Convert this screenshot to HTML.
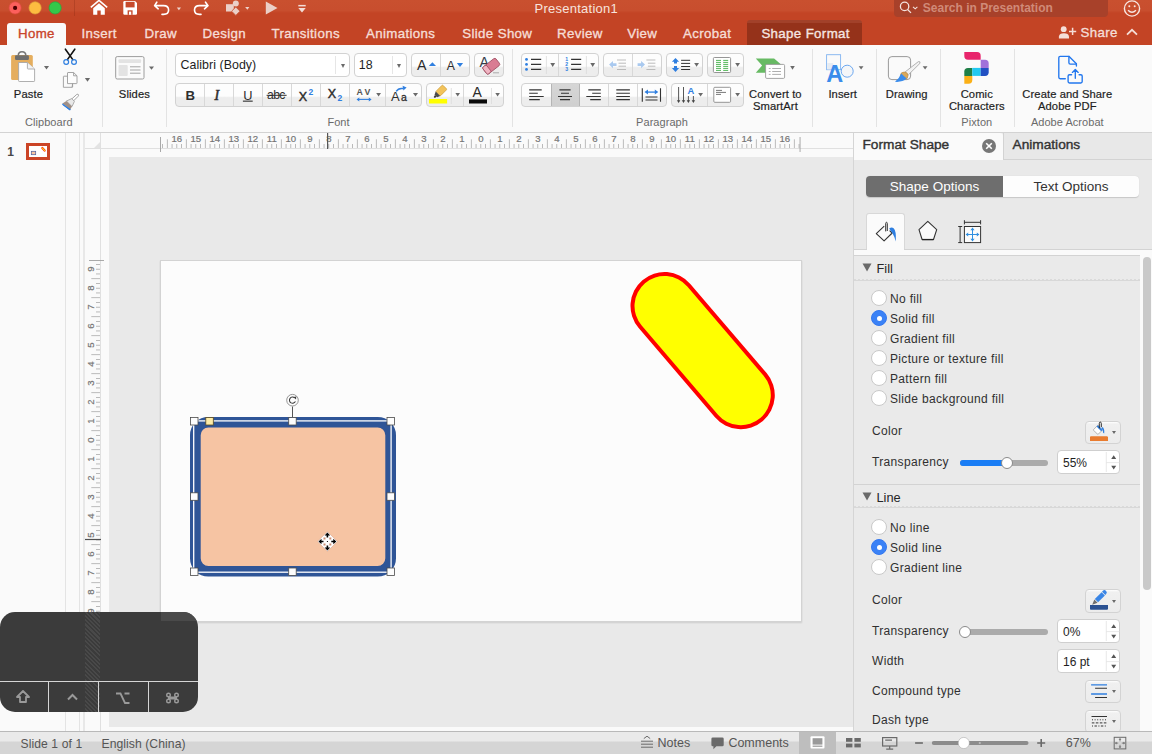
<!DOCTYPE html>
<html><head><meta charset="utf-8">
<style>
*{box-sizing:border-box;margin:0;padding:0}
html,body{width:1152px;height:754px;overflow:hidden;background:#FAFAFA;font-family:"Liberation Sans",sans-serif;color:#262626}
.a{position:absolute}
.t{position:absolute;white-space:nowrap}
#title{left:0;top:0;width:1152px;height:45px;background:linear-gradient(#C9502F 0px,#C84E2E 10.5px,#C34425 13px,#C34425 45px)}
.tab{position:absolute;top:25.5px;font-size:13.3px;font-weight:400;-webkit-text-stroke:0.35px currentColor;color:#F6DDD6;white-space:nowrap;letter-spacing:0.35px}
#ribbon{left:0;top:45px;width:1152px;height:88px;background:#FAFAFA;border-bottom:1px solid #D3D3D3}
.sep{position:absolute;top:49px;width:1px;height:78px;background:#E3E3E3}
.glabel{position:absolute;top:116px;font-size:11px;color:#6A6A6A;white-space:nowrap;text-align:center;letter-spacing:0.05px}
.rl{position:absolute;font-size:11.2px;color:#1E1E1E;white-space:nowrap;text-align:center;letter-spacing:0.1px;-webkit-text-stroke:0.2px #1E1E1E}
.btn{position:absolute;border:1px solid #D2D2D2;border-radius:4px;background:linear-gradient(#FDFDFD 0%,#FDFDFD 55%,#EDEDED 62%,#EDEDED 100%);overflow:hidden}
.combo{position:absolute;border:1px solid #D2D2D2;border-radius:4px;background:#FFFFFF}
.vs{position:absolute;top:0;bottom:0;width:1px;background:#D8D8D8}
.dd{position:absolute;width:0;height:0;border-left:3.5px solid transparent;border-right:3.5px solid transparent;border-top:5px solid #6A6A6A}
#panel{left:854px;top:133px;width:298px;height:598px;background:#E9E9E9}
.sec{position:absolute;left:0;width:286px;background:#EAEAEA}
.radio{position:absolute;width:16px;height:16px;border-radius:50%;background:#FFFFFF;border:1px solid #C9C9C9}
.radio.on{background:#3B82F6;border:1px solid #3478F0}
.radio.on:after{content:"";position:absolute;left:4.5px;top:4.5px;width:5px;height:5px;border-radius:50%;background:#fff}
.spin{background:#FFF;border:1px solid #CFCFCF;border-radius:4px}
.pl{position:absolute;font-size:12px;color:#303030;white-space:nowrap;letter-spacing:0.33px}
</style></head>
<body>
<!-- TITLE BAR -->
<div id="title" class="a"></div>
<svg class="a" style="left:0;top:0" width="70" height="20">
<circle cx="15.1" cy="7.9" r="6.1" fill="#FC605C" stroke="#DE4A40" stroke-width="0.7"/>
<circle cx="15.1" cy="7.9" r="2.1" fill="#4D0002"/>
<circle cx="35.1" cy="7.9" r="6.1" fill="#FDBC40" stroke="#DEA03A" stroke-width="0.7"/>
<circle cx="55.1" cy="7.9" r="6.1" fill="#34C84A" stroke="#27A83A" stroke-width="0.7"/>
</svg>
<div class="t" style="left:534.5px;top:1px;font-size:13px;color:#F7E3DD;letter-spacing:0.25px">Presentation1</div>

<div class="a" style="left:74px;top:0;width:1px;height:16px;background:rgba(120,30,10,0.25)"></div>
<!-- tabs -->
<div class="a" style="left:7px;top:23px;width:59px;height:22px;background:#FAFAFA;border-radius:3px 3px 0 0"></div>
<div class="tab" style="left:18px;color:#C9452A">Home</div>
<div class="tab" style="left:81.5px">Insert</div>
<div class="tab" style="left:144.5px">Draw</div>
<div class="tab" style="left:202.5px">Design</div>
<div class="tab" style="left:271.5px">Transitions</div>
<div class="tab" style="left:366px">Animations</div>
<div class="tab" style="left:462.3px">Slide Show</div>
<div class="tab" style="left:557px">Review</div>
<div class="tab" style="left:627.2px">View</div>
<div class="tab" style="left:683.1px">Acrobat</div>
<div class="a" style="left:747px;top:20px;width:115px;height:25px;background:linear-gradient(#A2412A 0,#A2412A 2.5px,#95321A 3.5px);border-radius:3px 3px 0 0"></div>
<div class="tab" style="left:761.4px;color:#F6E6E1">Shape Format</div>

<!-- search -->
<div class="a" style="left:894px;top:0;width:214px;height:17px;background:#A8412A;border-radius:0 0 4px 4px"></div>
<div class="t" style="left:922.8px;top:1px;font-size:12px;font-weight:700;color:#D08A78">Search in Presentation</div>
<svg class="a" style="left:0;top:0" width="1152" height="45">
<g fill="none" stroke="#F4E3DE" stroke-width="1.3"><circle cx="904.6" cy="6.4" r="4.2"/><path d="M907.6 9.5 L911 12.9"/><path d="M913 6.8 L915.2 8.8 L917.4 6.8" stroke-width="1.1"/></g>
<g fill="none" stroke="#F7E6E1" stroke-width="1.4"><circle cx="1132" cy="8.5" r="7.6"/><path d="M1128 10.2 Q1132 14.2 1136 10.2" stroke-width="1.3"/></g>
<circle cx="1129.3" cy="6.3" r="1" fill="#F7E6E1"/><circle cx="1134.7" cy="6.3" r="1" fill="#F7E6E1"/>
<!-- share person -->
<circle cx="1063.7" cy="29.2" r="2.9" fill="#F5DED7"/>
<path d="M1058.9 38.6 L1058.9 36.5 Q1059.3 33.3 1063.9 33.3 Q1068.6 33.3 1069 36.5 L1069 38.6 Z" fill="#F5DED7"/>
<path d="M1072.6 27.8 V35 M1069 31.4 H1076.2" stroke="#F5DED7" stroke-width="1.5"/>
<path d="M1127 34.6 L1132 29.8 L1137 34.6" fill="none" stroke="#F5DED7" stroke-width="1.8"/>
<!-- quick access -->
<path d="M90.8 7.4 L99 0.4 L107.2 7.4" fill="none" stroke="#FFFFFF" stroke-width="1.6"/>
<path d="M93.2 8.2 L99 3.2 L104.8 8.2 V14.8 H100.7 V10.6 H97.3 V14.8 H93.2 Z" fill="#FFFFFF"/>
<path d="M123.3 2.2 Q123.3 1 124.5 1 H135 L137 3 V13.6 Q137 14.8 135.8 14.8 H124.5 Q123.3 14.8 123.3 13.6 Z" fill="#FFFFFF"/>
<rect x="125.6" y="1.8" width="9" height="5.6" fill="#C64A2C"/>
<rect x="127.6" y="10.3" width="5" height="4.5" fill="#C64A2C"/>
<rect x="129" y="11.6" width="2.2" height="3.2" fill="#FFFFFF"/>
<path d="M156.8 2.2 L154.6 5.6 L158.2 8.8 M155 5.6 H163.5 Q168.6 5.6 168.6 10 Q168.6 14.4 163.5 14.4 H162" fill="none" stroke="#FFFFFF" stroke-width="1.6" stroke-linejoin="round" stroke-linecap="round"/>
<path d="M176.8 7.5 H181 L178.9 10.2 Z" fill="#EED3CC"/>
<path d="M205.5 2.2 L208 5.6 L204.5 8.8 M207.6 5.6 H199.5 Q194.5 5.6 194.5 10 Q194.5 14.4 199.5 14.4 H201" fill="none" stroke="#FFFFFF" stroke-width="1.6" stroke-linejoin="round" stroke-linecap="round"/>
<rect x="226" y="4.2" width="7.8" height="7.3" fill="#EBCFC7"/>
<circle cx="235.8" cy="3.6" r="3" fill="#EBCFC7"/>
<path d="M235.8 7 L240 11.2 L235.8 15.4 L231.6 11.2 Z" fill="#EBCFC7" stroke="#C64A2C" stroke-width="0.8"/>
<path d="M245.2 7 H249.4 L247.3 9.8 Z" fill="#EED3CC"/>
<path d="M265.8 1.5 L277.5 8 L265.8 14.5 Z" fill="#EBCFC7"/>
<rect x="298.3" y="4.9" width="7.4" height="1.5" fill="#F3DDD7"/>
<path d="M298.3 8.1 H305.7 L302 12.6 Z" fill="#F3DDD7"/>
</svg>

<div class="tab" style="left:1080.6px;top:24.5px;color:#F5DED7">Share</div>

<!-- RIBBON -->
<div id="ribbon" class="a"></div>
<div class="sep" style="left:102px"></div>
<div class="sep" style="left:166px"></div>
<div class="sep" style="left:512px"></div>
<div class="sep" style="left:812px"></div>
<div class="sep" style="left:876px"></div>
<div class="sep" style="left:940px"></div>
<div class="sep" style="left:1014px"></div>









<div class="rl" style="left:-31.6px;width:120px;top:88px">Paste</div>
<div class="rl" style="left:74.4px;width:120px;top:88px">Slides</div>
<div class="glabel" style="left:-11.200000000000003px;width:120px;top:116px">Clipboard</div>
<div class="glabel" style="left:278.5px;width:120px;top:116px">Font</div>
<div class="glabel" style="left:602px;width:120px;top:116px">Paragraph</div>
<div class="glabel" style="left:916.8px;width:120px;top:116px">Pixton</div>
<div class="glabel" style="left:1007.3px;width:120px;top:116px">Adobe Acrobat</div>
<div class="rl" style="left:715.4px;width:120px;top:88px;line-height:12px">Convert to<br>SmartArt</div>
<div class="rl" style="left:782.7px;width:120px;top:88px">Insert</div>
<div class="rl" style="left:846.7px;width:120px;top:88px">Drawing</div>
<div class="rl" style="left:916.8px;width:120px;top:88px;line-height:12px">Comic<br>Characters</div>
<div class="rl" style="left:1007.3px;width:120px;top:88px;line-height:12px">Create and Share<br>Adobe PDF</div>
<!-- font combos -->
<div class="combo" style="left:175px;top:53px;width:175px;height:24px"><div class="vs" style="left:159px;top:2px;bottom:2px;background:#E6E6E6"></div><div class="dd" style="left:164.5px;top:9.5px;border-left-width:2.8px;border-right-width:2.8px;border-top-width:4px"></div></div>
<div class="t" style="left:180.5px;top:58px;font-size:12.4px;color:#1E1E1E;letter-spacing:0.05px">Calibri (Body)</div>
<div class="combo" style="left:354px;top:53px;width:53px;height:24px"><div class="vs" style="left:37px;top:2px;bottom:2px;background:#E6E6E6"></div><div class="dd" style="left:42px;top:9.5px;border-left-width:2.8px;border-right-width:2.8px;border-top-width:4px"></div></div>
<div class="t" style="left:358.8px;top:58px;font-size:12.4px;color:#1E1E1E">18</div>

<div class="btn" style="left:411px;top:53px;width:59px;height:24px"><div class="vs" style="left:27.9px"></div></div>
<div class="btn" style="left:474px;top:53px;width:30px;height:24px"></div>
<div class="btn" style="left:175px;top:83px;width:247px;height:24px"><div class="vs" style="left:27.9px"></div><div class="vs" style="left:56.6px"></div><div class="vs" style="left:86.1px"></div><div class="vs" style="left:115.0px"></div><div class="vs" style="left:143.9px"></div><div class="vs" style="left:173.3px"></div><div class="vs" style="left:209.0px"></div></div>
<div class="btn" style="left:426px;top:83px;width:78px;height:24px"><div class="vs" style="left:36.2px"></div></div>
<!-- paragraph -->
<div class="btn" style="left:521px;top:53px;width:78px;height:24px"><div class="vs" style="left:35.8px"></div></div>
<div class="btn" style="left:603px;top:53px;width:59px;height:24px"><div class="vs" style="left:28.0px"></div></div>
<div class="btn" style="left:666px;top:53px;width:37px;height:24px"></div>
<div class="btn" style="left:707px;top:53px;width:37px;height:24px"></div>
<div class="btn" style="left:521px;top:83px;width:146px;height:24px">
<div class="a" style="left:28.7px;top:0;width:29px;height:24px;background:linear-gradient(#D6D6D6,#CFCFCF);border-left:1px solid #B5B5B5;border-right:1px solid #B5B5B5"></div><div class="vs" style="left:86.2px"></div><div class="vs" style="left:114.8px"></div></div>
<div class="btn" style="left:671px;top:83px;width:73px;height:24px"><div class="vs" style="left:34.7px"></div></div>







<!-- RIBBON ICONS -->
<svg class="a" style="left:0;top:0" width="1152" height="133" font-family="Liberation Sans">
<!-- paste -->
<rect x="11.1" y="55" width="21.7" height="25" rx="1.5" fill="#E5AE5E"/>
<path d="M18.3 55.5 Q18.3 51.8 22 51.8 Q25.8 51.8 25.8 55.5" fill="none" stroke="#767676" stroke-width="1.6"/>
<rect x="15" y="55.3" width="13.9" height="4.6" rx="1.2" fill="#6E6E6E"/>
<path d="M18.6 62.5 H27.4 L34.6 69 V80.8 Q34.6 81.5 33.9 81.5 H19.3 Q18.6 81.5 18.6 80.8 Z" fill="#FFFFFF" stroke="#A6A6A6" stroke-width="0.9"/>
<path d="M27.4 62.5 V68.3 Q27.4 69 28.1 69 H34.6" fill="#F3F3F3" stroke="#A6A6A6" stroke-width="0.9"/>
<path d="M44 66 H49 L46.5 69.6 Z" fill="#6A6A6A"/>
<!-- scissors -->
<path d="M65.4 49.2 L72.8 59.6 M74.8 49.2 L67.4 59.6" stroke="#111" stroke-width="1.6" stroke-linecap="round"/>
<circle cx="66.2" cy="62" r="2.4" fill="none" stroke="#2F7FE0" stroke-width="1.2"/>
<circle cx="74" cy="62" r="2.4" fill="none" stroke="#2F7FE0" stroke-width="1.2"/>
<!-- copy -->
<path d="M67.5 83.6 V73 Q67.5 72.5 68 72.5 H73.6 L77 75.8 V83.1 Q77 83.6 76.5 83.6 Z" fill="#FCFCFC" stroke="#9B9B9B" stroke-width="0.9"/>
<path d="M73.6 72.5 V75.8 H77" fill="none" stroke="#9B9B9B" stroke-width="0.9"/>
<path d="M63.4 87.3 V76.7 Q63.4 76.2 63.9 76.2 H67.5 M72.6 83.6 V86.8 Q72.6 87.3 72.1 87.3 Z" fill="none" stroke="#9B9B9B" stroke-width="0.9"/>
<path d="M63.4 87.3 H72.1" stroke="#9B9B9B" stroke-width="0.9"/>
<path d="M84.9 78 H90.1 L87.5 81.7 Z" fill="#6A6A6A"/>
<!-- format painter -->
<path d="M71.5 99.2 L76.8 94.4 Q78.2 93.6 78.6 95 Q78.6 95.8 77.8 96.6 L72.8 101.6 Z" fill="#FFFFFF" stroke="#9A9A9A" stroke-width="0.9"/>
<path d="M66.4 101 L71.8 98.6 L74.4 101.4 L72 106.6 Z" fill="#E9E9E9" stroke="#9A9A9A" stroke-width="0.8"/>
<path d="M66.4 101 L72 106.6 L70.3 109.6 L62.4 103.6 Z" fill="#A08F86"/>
<path d="M63.2 104.2 L70.8 109.2 L70 110.4 L62.2 104.8 Z" fill="#2F7FE0"/>
<path d="M62.4 103.6 L70.3 109.6 L69.6 110.2 L62 104.2 Z" fill="#2F7FE0"/>
<!-- slides -->
<rect x="115.7" y="56.6" width="28.3" height="22.4" rx="1.5" fill="#FBFBFB" stroke="#9C9C9C" stroke-width="1"/>
<rect x="118.5" y="59.2" width="22.6" height="3.8" rx="1" fill="#E3E3E3"/>
<rect x="118.5" y="65" width="9.2" height="11" rx="1" fill="#E3E3E3"/>
<path d="M130 66.8 H140.5 M130 70 H140.5 M130 73.2 H140.5" stroke="#999" stroke-width="0.9"/>
<path d="M149 66.6 H154 L151.5 69.7 Z" fill="#6A6A6A"/>
<!-- font size -->
<text x="417" y="69.5" font-size="14.2" fill="#2A2A2A">A</text>
<path d="M428.8 66 L432.4 62.2 L436 66 Z" fill="#2F7FE0"/>
<text x="446.8" y="69.5" font-size="12.2" fill="#2A2A2A">A</text>
<path d="M456.8 63 H463.1 L460 66.9 Z" fill="#2F7FE0"/>
<!-- clear formatting -->
<text x="479.4" y="66.5" font-size="14.2" fill="#333D4A">A</text>
<g transform="translate(491.3 66.2) rotate(-38)">
<rect x="-8.2" y="-4.4" width="16.4" height="8.8" rx="1.8" fill="#D97C93" stroke="#9E4E61" stroke-width="0.8"/>
<rect x="-8.2" y="-4.4" width="5" height="8.8" rx="1.5" fill="#F0B5C3" stroke="#9E4E61" stroke-width="0.8"/>
</g>
<path d="M493 72.8 H499" stroke="#999" stroke-width="0.8"/>
<!-- B I U -->
<text x="185.6" y="99.6" font-size="13.2" font-weight="700" fill="#2E2E2E">B</text>
<text x="214.4" y="99.6" font-size="14" font-style="italic" font-family="Liberation Serif" fill="#2E2E2E" stroke="#2E2E2E" stroke-width="0.5">I</text>
<text x="243.3" y="99.6" font-size="12.8" fill="#2E2E2E">U</text>
<rect x="242.9" y="100.6" width="9.8" height="1.1" fill="#2E2E2E"/>
<text x="267" y="98.6" font-size="12.2" fill="#2E2E2E" letter-spacing="-0.6">abc</text>
<rect x="266.6" y="94.8" width="20" height="1" fill="#2E2E2E"/>
<text x="298.8" y="100.8" font-size="12.5" fill="#2E2E2E" stroke="#2E2E2E" stroke-width="0.45">X</text>
<text x="308.4" y="94.9" font-size="8.5" font-weight="700" fill="#2F7FE0">2</text>
<text x="327.8" y="97.6" font-size="12.5" fill="#2E2E2E" stroke="#2E2E2E" stroke-width="0.45">X</text>
<text x="337.4" y="100.8" font-size="8.5" font-weight="700" fill="#2F7FE0">2</text>
<!-- AV -->
<text x="356.6" y="94.6" font-size="8.8" font-weight="700" fill="#555" letter-spacing="2.2">AV</text>
<path d="M357.5 99.4 H370.6" stroke="#2F7FE0" stroke-width="1.1"/>
<path d="M356.5 99.4 L359.3 97.4 V101.4 Z M371.6 99.4 L368.8 97.4 V101.4 Z" fill="#2F7FE0"/>
<path d="M376.2 93 H381 L378.6 96.6 Z" fill="#6A6A6A"/>
<!-- Aa -->
<text x="391" y="100.8" font-size="13" fill="#2E2E2E">A</text>
<text x="401" y="100.8" font-size="10.5" fill="#2E2E2E" stroke="#2E2E2E" stroke-width="0.3">a</text>
<path d="M396.2 91.4 Q398.6 87.6 403.2 88.6" fill="none" stroke="#2F7FE0" stroke-width="1.5"/>
<path d="M402.6 85.8 L406.6 87.4 L403.4 90.6 Z" fill="#2F7FE0"/>
<path d="M413 93 H418 L415.5 96.6 Z" fill="#6A6A6A"/>
<!-- highlighter -->
<g transform="translate(438.8 93) rotate(45)">
<rect x="-3.2" y="-8.4" width="6.4" height="9.6" rx="1" fill="#F2C35B" stroke="#C9972F" stroke-width="0.6"/>
<path d="M-3.2 1.2 H3.2 L1.8 4.2 H-1.8 Z" fill="#4A4A4A"/>
<path d="M-1.2 4.2 H1.2 L0.8 6.4 H-0.8 Z" fill="#3A3A3A"/>
</g>
<rect x="429" y="99" width="18.1" height="4.5" fill="#FFFF00"/>
<path d="M451.3 88 V104" stroke="#DADADA" stroke-width="0.8"/>
<path d="M455.4 93 H460 L457.7 96.6 Z" fill="#6A6A6A"/>
<!-- font color -->
<text x="472.5" y="96.8" font-size="14" fill="#2A2A2A">A</text>
<rect x="469" y="99.4" width="18" height="4.1" fill="#0A0A0A"/>
<path d="M491.5 88 V104" stroke="#DADADA" stroke-width="0.8"/>
<path d="M495.3 93 H499.9 L497.6 96.6 Z" fill="#6A6A6A"/>
<!-- bullets -->
<g fill="#2F7FE0"><circle cx="526.5" cy="59.4" r="1.4"/><circle cx="526.5" cy="64.4" r="1.4"/><circle cx="526.5" cy="69.4" r="1.4"/></g>
<path d="M531 59.4 H541.2 M531 64.4 H541.2 M531 69.4 H541.2" stroke="#333" stroke-width="1.1"/>
<path d="M546.4 56 V74" stroke="#DADADA" stroke-width="0.8"/>
<path d="M550.3 63 H555.1 L552.7 66.9 Z" fill="#6A6A6A"/>
<g font-size="5.2" font-weight="700" fill="#2F7FE0" text-anchor="middle"><text x="566.8" y="61.3">1</text><text x="566.8" y="66.3">2</text><text x="566.8" y="71.3">3</text></g>
<path d="M571.1 59.4 H581.2 M571.1 64.4 H581.2 M571.1 69.4 H581.2" stroke="#333" stroke-width="1.1"/>
<path d="M586.4 56 V74" stroke="#DADADA" stroke-width="0.8"/>
<path d="M590.3 63 H595.1 L592.7 66.9 Z" fill="#6A6A6A"/>
<!-- indent -->
<path d="M609.1 64.6 L613 61 V63.2 H616.5 V66 H613 V68.2 Z" fill="#A9C9EF"/>
<path d="M617 60 H626 M618.5 63.2 H626 M618.5 66.2 H626 M617 69.5 H626" stroke="#B5B5B5" stroke-width="0.9"/>
<path d="M645 64.6 L641.1 61 V63.2 H637.6 V66 H641.1 V68.2 Z" fill="#A9C9EF"/>
<path d="M646.4 60 H655.4 M647.9 63.2 H655.4 M647.9 66.2 H655.4 M646.4 69.5 H655.4" stroke="#B5B5B5" stroke-width="0.9"/>
<!-- line spacing -->
<path d="M675.5 58 L679.1 61.8 H677 V63.5 H674 V61.8 H671.9 Z M675.5 71.9 L679.1 68.1 H677 V65.9 H674 V68.1 H671.9 Z" fill="#2F7FE0"/>
<path d="M681.1 60.3 H690.1 M681.1 63.4 H690.1 M681.1 66.5 H690.1 M681.1 69.5 H690.1" stroke="#333" stroke-width="1"/>
<path d="M694.2 63.1 H699 L696.6 66.7 Z" fill="#6A6A6A"/>
<!-- columns -->
<rect x="713.4" y="57.5" width="17.2" height="15" rx="1" fill="#FFFFFF" stroke="#8A8A8A" stroke-width="0.9"/>
<path d="M716 60.4 H721 M716 62.4 H721 M716 64.4 H721 M716 66.4 H721 M716 68.4 H721 M716 70.4 H721 M723.2 60.4 H728.2 M723.2 62.4 H728.2 M723.2 64.4 H728.2 M723.2 66.4 H728.2 M723.2 68.4 H728.2 M723.2 70.4 H728.2" stroke="#3FAF45" stroke-width="0.9"/>
<path d="M735.2 63.1 H740 L737.6 66.7 Z" fill="#6A6A6A"/>
<!-- align -->
<g stroke="#333" stroke-width="1.1">
<path d="M529.2 89.9 H541.7 M529.2 93.2 H537.8 M529.2 96.5 H543.7 M529.2 99.6 H539.8"/>
<path d="M559.4 89.9 H570.6 M561 93.2 H569 M558 96.5 H572 M560 99.6 H570"/>
<path d="M588.3 89.9 H600.8 M592.2 93.2 H600.8 M586.3 96.5 H600.8 M590.2 99.6 H600.8"/>
<path d="M616.3 89.9 H629.9 M616.3 93.2 H629.9 M616.3 96.5 H629.9 M616.3 99.6 H629.9"/>
<path d="M642.3 88.2 V101.8 M660.5 88.2 V101.8 M645.5 97 H657.5 M645.5 100 H657.5"/>
</g>
<path d="M644.5 92.1 L648 89.6 V94.6 Z M658.3 92.1 L654.8 89.6 V94.6 Z" fill="#2F7FE0"/>
<path d="M647 92.1 H655.8" stroke="#2F7FE0" stroke-width="1.3"/>
<!-- text direction -->
<g stroke="#444" stroke-width="0.9"><path d="M678.6 87 V102 M683.5 87 V102 M688.4 96 V102 M693.4 96 V102"/></g>
<g fill="#444"><path d="M676.9 100.3 H680.3 L678.6 103 Z M681.8 100.3 H685.2 L683.5 103 Z M686.7 100.3 H690.1 L688.4 103 Z M691.7 100.3 H695.1 L693.4 103 Z"/></g>
<text x="687.6" y="93.8" font-size="9.4" font-weight="700" fill="#2F7FE0">A</text>
<path d="M698.2 93 H703 L700.6 96.5 Z" fill="#6A6A6A"/>
<rect x="713.8" y="87.3" width="16.8" height="15" rx="1" fill="#FFFFFF" stroke="#8A8A8A" stroke-width="0.9"/>
<path d="M716 90.4 H722 M716 92.4 H726 M716 94.4 H721" stroke="#555" stroke-width="0.8"/>
<path d="M735.2 93 H740 L737.6 96.5 Z" fill="#6A6A6A"/>
<!-- smartart -->
<path d="M755.8 58.4 H774.1 L781.1 64.4 V72.75 H755.8 L762.1 65.55 Z" fill="#67BA63"/>
<rect x="765.6" y="64.4" width="19" height="14" rx="1.2" fill="#FFFFFF" stroke="#9A9A9A" stroke-width="0.9"/>
<path d="M768.8 68.5 H770.6 M768.8 71.5 H770.6 M768.8 74.4 H770.6 M772.2 68.5 H781 M772.2 71.5 H781 M772.2 74.4 H781" stroke="#A6A6A6" stroke-width="0.9"/>
<path d="M790.2 66 H794.8 L792.5 69.7 Z" fill="#6A6A6A"/>
<!-- insert -->
<rect x="826.6" y="54.7" width="14" height="15" fill="none" stroke="#80B3F0" stroke-width="0.9"/>
<rect x="827.2" y="63" width="6" height="6.4" fill="#E6ECF3"/>
<circle cx="847.2" cy="71.2" r="6" fill="#F4F6F8" stroke="#5C9EEE" stroke-width="0.9"/>
<text x="826.2" y="81.5" font-size="23.5" font-weight="700" fill="#3A8CEB">A</text>
<path d="M858.7 66.2 H863.5 L861.1 69.5 Z" fill="#6A6A6A"/>
<!-- drawing -->
<rect x="888.4" y="56.6" width="22.2" height="23" rx="3.5" fill="#FAFAFA" stroke="#8F8F8F" stroke-width="0.9"/>
<path d="M918.4 61.6 Q920.8 61.2 919.9 63.4 L908.2 75 L905 72 Z" fill="#F2F2F2" stroke="#A0A0A0" stroke-width="0.8"/>
<circle cx="904.2" cy="75.8" r="3.8" fill="#D9A85A" stroke="#B98A3E" stroke-width="0.6"/>
<path d="M901.2 73.6 L906.6 78.6 Q902.6 82.4 895 81.8 Q899.2 78.8 901.2 73.6 Z" fill="#3A8CEB"/>
<path d="M922.7 66.2 H927.5 L925.1 69.5 Z" fill="#6A6A6A"/>
<!-- pixton -->
<path d="M964.3 52 H977 Q980.7 52 980.7 55.7 V59.7 H968 Q964.3 59.7 964.3 56 Z" fill="#E8256C"/>
<path d="M980.7 59.7 H985 Q988.7 59.7 988.7 63.4 V67.9 H980.7 Z" fill="#A171DA"/>
<path d="M964.3 71.6 Q964.3 67.9 968 67.9 H972.3 V75.9 H964.3 Z" fill="#1F7F47"/>
<rect x="972.3" y="67.9" width="8.4" height="8" fill="#21C9F1"/>
<path d="M980.7 67.9 H988.7 V72.2 Q988.7 75.9 985 75.9 H980.7 Z" fill="#2150C2"/>
<path d="M964.3 75.9 H972.3 V80.1 Q972.3 83.8 968.6 83.8 H964.3 Z" fill="#FBB016"/>
<!-- acrobat -->
<g fill="none" stroke="#2277EE" stroke-width="1.35" stroke-linecap="round" stroke-linejoin="round">
<path d="M1065.3 78.7 H1060.2 Q1058.8 78.7 1058.8 77.3 V57.7 Q1058.8 56.3 1060.2 56.3 H1068.9 L1076.4 63.8 V66"/>
<path d="M1068.9 56.3 V62.7 Q1068.9 64.1 1070.3 64.1 H1076.4"/>
<path d="M1071.6 74.7 H1069.5 Q1068.1 74.7 1068.1 76.1 V81.6 Q1068.1 83 1069.5 83 H1080.8 Q1082.2 83 1082.2 81.6 V76.1 Q1082.2 74.7 1080.8 74.7 H1079.1"/>
<path d="M1075.3 78.2 V69.6 M1072.4 72.4 L1075.3 69.5 L1078.2 72.4"/>
</g>
</svg>

<!-- LEFT PANEL -->
<div class="a" style="left:65px;top:133px;width:1px;height:598px;background:#E4E4E4"></div>
<div class="a" style="left:79px;top:133px;width:1px;height:598px;background:#E4E4E4"></div>
<div class="a" style="left:83px;top:133px;width:2px;height:598px;background:#E8E8E8"></div>
<div class="t" style="left:7.3px;top:145px;font-size:12px;font-weight:700;color:#484848">1</div>
<div class="a" style="left:26px;top:143px;width:24px;height:17px;border:3px solid #CB4426;background:#FFF"></div>
<svg class="a" style="left:0;top:138px" width="60" height="27">
<rect x="31.3" y="13.3" width="4.4" height="3.4" fill="#F6C4A3" stroke="#4A5E9A" stroke-width="0.7"/>
<line x1="42.3" y1="10" x2="44.6" y2="12.6" stroke="#FF3A1A" stroke-width="2.2" stroke-linecap="round"/>
<line x1="42.3" y1="10" x2="44.6" y2="12.6" stroke="#FFF200" stroke-width="1" stroke-linecap="round"/>
</svg>

<!-- RULERS -->
<div class="a" style="left:85px;top:148px;width:768px;height:1px;background:#E0E0E0"></div>
<div class="a" style="left:100px;top:133px;width:1px;height:598px;background:#E0E0E0"></div>

<svg class="a" style="left:0;top:0" width="1152" height="160"><rect x="162.15" y="144" width="0.8" height="4" fill="#ABABAB"/><rect x="166.90" y="139.3" width="0.8" height="8.7" fill="#ABABAB"/><rect x="171.65" y="144" width="0.8" height="4" fill="#ABABAB"/><rect x="176.40" y="144" width="0.8" height="4" fill="#ABABAB"/><rect x="181.15" y="144" width="0.8" height="4" fill="#ABABAB"/><rect x="185.90" y="139.3" width="0.8" height="8.7" fill="#ABABAB"/><rect x="190.65" y="144" width="0.8" height="4" fill="#ABABAB"/><rect x="195.40" y="144" width="0.8" height="4" fill="#ABABAB"/><rect x="200.15" y="144" width="0.8" height="4" fill="#ABABAB"/><rect x="204.90" y="139.3" width="0.8" height="8.7" fill="#ABABAB"/><rect x="209.65" y="144" width="0.8" height="4" fill="#ABABAB"/><rect x="214.40" y="144" width="0.8" height="4" fill="#ABABAB"/><rect x="219.15" y="144" width="0.8" height="4" fill="#ABABAB"/><rect x="223.90" y="139.3" width="0.8" height="8.7" fill="#ABABAB"/><rect x="228.65" y="144" width="0.8" height="4" fill="#ABABAB"/><rect x="233.40" y="144" width="0.8" height="4" fill="#ABABAB"/><rect x="238.15" y="144" width="0.8" height="4" fill="#ABABAB"/><rect x="242.90" y="139.3" width="0.8" height="8.7" fill="#ABABAB"/><rect x="247.65" y="144" width="0.8" height="4" fill="#ABABAB"/><rect x="252.40" y="144" width="0.8" height="4" fill="#ABABAB"/><rect x="257.15" y="144" width="0.8" height="4" fill="#ABABAB"/><rect x="261.90" y="139.3" width="0.8" height="8.7" fill="#ABABAB"/><rect x="266.65" y="144" width="0.8" height="4" fill="#ABABAB"/><rect x="271.40" y="144" width="0.8" height="4" fill="#ABABAB"/><rect x="276.15" y="144" width="0.8" height="4" fill="#ABABAB"/><rect x="280.90" y="139.3" width="0.8" height="8.7" fill="#ABABAB"/><rect x="285.65" y="144" width="0.8" height="4" fill="#ABABAB"/><rect x="290.40" y="144" width="0.8" height="4" fill="#ABABAB"/><rect x="295.15" y="144" width="0.8" height="4" fill="#ABABAB"/><rect x="299.90" y="139.3" width="0.8" height="8.7" fill="#ABABAB"/><rect x="304.65" y="144" width="0.8" height="4" fill="#ABABAB"/><rect x="309.40" y="144" width="0.8" height="4" fill="#ABABAB"/><rect x="314.15" y="144" width="0.8" height="4" fill="#ABABAB"/><rect x="318.90" y="139.3" width="0.8" height="8.7" fill="#ABABAB"/><rect x="323.65" y="144" width="0.8" height="4" fill="#ABABAB"/><rect x="328.40" y="144" width="0.8" height="4" fill="#ABABAB"/><rect x="333.15" y="144" width="0.8" height="4" fill="#ABABAB"/><rect x="337.90" y="139.3" width="0.8" height="8.7" fill="#ABABAB"/><rect x="342.65" y="144" width="0.8" height="4" fill="#ABABAB"/><rect x="347.40" y="144" width="0.8" height="4" fill="#ABABAB"/><rect x="352.15" y="144" width="0.8" height="4" fill="#ABABAB"/><rect x="356.90" y="139.3" width="0.8" height="8.7" fill="#ABABAB"/><rect x="361.65" y="144" width="0.8" height="4" fill="#ABABAB"/><rect x="366.40" y="144" width="0.8" height="4" fill="#ABABAB"/><rect x="371.15" y="144" width="0.8" height="4" fill="#ABABAB"/><rect x="375.90" y="139.3" width="0.8" height="8.7" fill="#ABABAB"/><rect x="380.65" y="144" width="0.8" height="4" fill="#ABABAB"/><rect x="385.40" y="144" width="0.8" height="4" fill="#ABABAB"/><rect x="390.15" y="144" width="0.8" height="4" fill="#ABABAB"/><rect x="394.90" y="139.3" width="0.8" height="8.7" fill="#ABABAB"/><rect x="399.65" y="144" width="0.8" height="4" fill="#ABABAB"/><rect x="404.40" y="144" width="0.8" height="4" fill="#ABABAB"/><rect x="409.15" y="144" width="0.8" height="4" fill="#ABABAB"/><rect x="413.90" y="139.3" width="0.8" height="8.7" fill="#ABABAB"/><rect x="418.65" y="144" width="0.8" height="4" fill="#ABABAB"/><rect x="423.40" y="144" width="0.8" height="4" fill="#ABABAB"/><rect x="428.15" y="144" width="0.8" height="4" fill="#ABABAB"/><rect x="432.90" y="139.3" width="0.8" height="8.7" fill="#ABABAB"/><rect x="437.65" y="144" width="0.8" height="4" fill="#ABABAB"/><rect x="442.40" y="144" width="0.8" height="4" fill="#ABABAB"/><rect x="447.15" y="144" width="0.8" height="4" fill="#ABABAB"/><rect x="451.90" y="139.3" width="0.8" height="8.7" fill="#ABABAB"/><rect x="456.65" y="144" width="0.8" height="4" fill="#ABABAB"/><rect x="461.40" y="144" width="0.8" height="4" fill="#ABABAB"/><rect x="466.15" y="144" width="0.8" height="4" fill="#ABABAB"/><rect x="470.90" y="139.3" width="0.8" height="8.7" fill="#ABABAB"/><rect x="475.65" y="144" width="0.8" height="4" fill="#ABABAB"/><rect x="480.40" y="144" width="0.8" height="4" fill="#ABABAB"/><rect x="485.15" y="144" width="0.8" height="4" fill="#ABABAB"/><rect x="489.90" y="139.3" width="0.8" height="8.7" fill="#ABABAB"/><rect x="494.65" y="144" width="0.8" height="4" fill="#ABABAB"/><rect x="499.40" y="144" width="0.8" height="4" fill="#ABABAB"/><rect x="504.15" y="144" width="0.8" height="4" fill="#ABABAB"/><rect x="508.90" y="139.3" width="0.8" height="8.7" fill="#ABABAB"/><rect x="513.65" y="144" width="0.8" height="4" fill="#ABABAB"/><rect x="518.40" y="144" width="0.8" height="4" fill="#ABABAB"/><rect x="523.15" y="144" width="0.8" height="4" fill="#ABABAB"/><rect x="527.90" y="139.3" width="0.8" height="8.7" fill="#ABABAB"/><rect x="532.65" y="144" width="0.8" height="4" fill="#ABABAB"/><rect x="537.40" y="144" width="0.8" height="4" fill="#ABABAB"/><rect x="542.15" y="144" width="0.8" height="4" fill="#ABABAB"/><rect x="546.90" y="139.3" width="0.8" height="8.7" fill="#ABABAB"/><rect x="551.65" y="144" width="0.8" height="4" fill="#ABABAB"/><rect x="556.40" y="144" width="0.8" height="4" fill="#ABABAB"/><rect x="561.15" y="144" width="0.8" height="4" fill="#ABABAB"/><rect x="565.90" y="139.3" width="0.8" height="8.7" fill="#ABABAB"/><rect x="570.65" y="144" width="0.8" height="4" fill="#ABABAB"/><rect x="575.40" y="144" width="0.8" height="4" fill="#ABABAB"/><rect x="580.15" y="144" width="0.8" height="4" fill="#ABABAB"/><rect x="584.90" y="139.3" width="0.8" height="8.7" fill="#ABABAB"/><rect x="589.65" y="144" width="0.8" height="4" fill="#ABABAB"/><rect x="594.40" y="144" width="0.8" height="4" fill="#ABABAB"/><rect x="599.15" y="144" width="0.8" height="4" fill="#ABABAB"/><rect x="603.90" y="139.3" width="0.8" height="8.7" fill="#ABABAB"/><rect x="608.65" y="144" width="0.8" height="4" fill="#ABABAB"/><rect x="613.40" y="144" width="0.8" height="4" fill="#ABABAB"/><rect x="618.15" y="144" width="0.8" height="4" fill="#ABABAB"/><rect x="622.90" y="139.3" width="0.8" height="8.7" fill="#ABABAB"/><rect x="627.65" y="144" width="0.8" height="4" fill="#ABABAB"/><rect x="632.40" y="144" width="0.8" height="4" fill="#ABABAB"/><rect x="637.15" y="144" width="0.8" height="4" fill="#ABABAB"/><rect x="641.90" y="139.3" width="0.8" height="8.7" fill="#ABABAB"/><rect x="646.65" y="144" width="0.8" height="4" fill="#ABABAB"/><rect x="651.40" y="144" width="0.8" height="4" fill="#ABABAB"/><rect x="656.15" y="144" width="0.8" height="4" fill="#ABABAB"/><rect x="660.90" y="139.3" width="0.8" height="8.7" fill="#ABABAB"/><rect x="665.65" y="144" width="0.8" height="4" fill="#ABABAB"/><rect x="670.40" y="144" width="0.8" height="4" fill="#ABABAB"/><rect x="675.15" y="144" width="0.8" height="4" fill="#ABABAB"/><rect x="679.90" y="139.3" width="0.8" height="8.7" fill="#ABABAB"/><rect x="684.65" y="144" width="0.8" height="4" fill="#ABABAB"/><rect x="689.40" y="144" width="0.8" height="4" fill="#ABABAB"/><rect x="694.15" y="144" width="0.8" height="4" fill="#ABABAB"/><rect x="698.90" y="139.3" width="0.8" height="8.7" fill="#ABABAB"/><rect x="703.65" y="144" width="0.8" height="4" fill="#ABABAB"/><rect x="708.40" y="144" width="0.8" height="4" fill="#ABABAB"/><rect x="713.15" y="144" width="0.8" height="4" fill="#ABABAB"/><rect x="717.90" y="139.3" width="0.8" height="8.7" fill="#ABABAB"/><rect x="722.65" y="144" width="0.8" height="4" fill="#ABABAB"/><rect x="727.40" y="144" width="0.8" height="4" fill="#ABABAB"/><rect x="732.15" y="144" width="0.8" height="4" fill="#ABABAB"/><rect x="736.90" y="139.3" width="0.8" height="8.7" fill="#ABABAB"/><rect x="741.65" y="144" width="0.8" height="4" fill="#ABABAB"/><rect x="746.40" y="144" width="0.8" height="4" fill="#ABABAB"/><rect x="751.15" y="144" width="0.8" height="4" fill="#ABABAB"/><rect x="755.90" y="139.3" width="0.8" height="8.7" fill="#ABABAB"/><rect x="760.65" y="144" width="0.8" height="4" fill="#ABABAB"/><rect x="765.40" y="144" width="0.8" height="4" fill="#ABABAB"/><rect x="770.15" y="144" width="0.8" height="4" fill="#ABABAB"/><rect x="774.90" y="139.3" width="0.8" height="8.7" fill="#ABABAB"/><rect x="779.65" y="144" width="0.8" height="4" fill="#ABABAB"/><rect x="784.40" y="144" width="0.8" height="4" fill="#ABABAB"/><rect x="789.15" y="144" width="0.8" height="4" fill="#ABABAB"/><rect x="793.90" y="139.3" width="0.8" height="8.7" fill="#ABABAB"/><rect x="798.65" y="144" width="0.8" height="4" fill="#ABABAB"/><g font-family="Liberation Sans" font-size="9.6" fill="#757575" stroke="#757575" stroke-width="0.2"><text x="176.80" y="142" text-anchor="middle">16</text><text x="195.80" y="142" text-anchor="middle">15</text><text x="214.80" y="142" text-anchor="middle">14</text><text x="233.80" y="142" text-anchor="middle">13</text><text x="252.80" y="142" text-anchor="middle">12</text><text x="271.80" y="142" text-anchor="middle">11</text><text x="290.80" y="142" text-anchor="middle">10</text><text x="309.80" y="142" text-anchor="middle">9</text><text x="328.80" y="142" text-anchor="middle">8</text><text x="347.80" y="142" text-anchor="middle">7</text><text x="366.80" y="142" text-anchor="middle">6</text><text x="385.80" y="142" text-anchor="middle">5</text><text x="404.80" y="142" text-anchor="middle">4</text><text x="423.80" y="142" text-anchor="middle">3</text><text x="442.80" y="142" text-anchor="middle">2</text><text x="461.80" y="142" text-anchor="middle">1</text><text x="480.80" y="142" text-anchor="middle">0</text><text x="499.80" y="142" text-anchor="middle">1</text><text x="518.80" y="142" text-anchor="middle">2</text><text x="537.80" y="142" text-anchor="middle">3</text><text x="556.80" y="142" text-anchor="middle">4</text><text x="575.80" y="142" text-anchor="middle">5</text><text x="594.80" y="142" text-anchor="middle">6</text><text x="613.80" y="142" text-anchor="middle">7</text><text x="632.80" y="142" text-anchor="middle">8</text><text x="651.80" y="142" text-anchor="middle">9</text><text x="670.80" y="142" text-anchor="middle">10</text><text x="689.80" y="142" text-anchor="middle">11</text><text x="708.80" y="142" text-anchor="middle">12</text><text x="727.80" y="142" text-anchor="middle">13</text><text x="746.80" y="142" text-anchor="middle">14</text><text x="765.80" y="142" text-anchor="middle">15</text><text x="784.80" y="142" text-anchor="middle">16</text></g><rect x="160.1" y="137" width="0.9" height="15" fill="#A0A0A0"/><rect x="799.6" y="137" width="0.9" height="15" fill="#A0A0A0"/><rect x="327" y="133" width="1.2" height="16" fill="#555"/></svg>
<svg class="a" style="left:0;top:0" width="110" height="754"><rect x="96" y="264.05" width="4" height="0.8" fill="#ABABAB"/><rect x="96" y="268.80" width="4" height="0.8" fill="#ABABAB"/><rect x="96" y="273.55" width="4" height="0.8" fill="#ABABAB"/><rect x="91.3" y="278.30" width="8.7" height="0.8" fill="#ABABAB"/><rect x="96" y="283.05" width="4" height="0.8" fill="#ABABAB"/><rect x="96" y="287.80" width="4" height="0.8" fill="#ABABAB"/><rect x="96" y="292.55" width="4" height="0.8" fill="#ABABAB"/><rect x="91.3" y="297.30" width="8.7" height="0.8" fill="#ABABAB"/><rect x="96" y="302.05" width="4" height="0.8" fill="#ABABAB"/><rect x="96" y="306.80" width="4" height="0.8" fill="#ABABAB"/><rect x="96" y="311.55" width="4" height="0.8" fill="#ABABAB"/><rect x="91.3" y="316.30" width="8.7" height="0.8" fill="#ABABAB"/><rect x="96" y="321.05" width="4" height="0.8" fill="#ABABAB"/><rect x="96" y="325.80" width="4" height="0.8" fill="#ABABAB"/><rect x="96" y="330.55" width="4" height="0.8" fill="#ABABAB"/><rect x="91.3" y="335.30" width="8.7" height="0.8" fill="#ABABAB"/><rect x="96" y="340.05" width="4" height="0.8" fill="#ABABAB"/><rect x="96" y="344.80" width="4" height="0.8" fill="#ABABAB"/><rect x="96" y="349.55" width="4" height="0.8" fill="#ABABAB"/><rect x="91.3" y="354.30" width="8.7" height="0.8" fill="#ABABAB"/><rect x="96" y="359.05" width="4" height="0.8" fill="#ABABAB"/><rect x="96" y="363.80" width="4" height="0.8" fill="#ABABAB"/><rect x="96" y="368.55" width="4" height="0.8" fill="#ABABAB"/><rect x="91.3" y="373.30" width="8.7" height="0.8" fill="#ABABAB"/><rect x="96" y="378.05" width="4" height="0.8" fill="#ABABAB"/><rect x="96" y="382.80" width="4" height="0.8" fill="#ABABAB"/><rect x="96" y="387.55" width="4" height="0.8" fill="#ABABAB"/><rect x="91.3" y="392.30" width="8.7" height="0.8" fill="#ABABAB"/><rect x="96" y="397.05" width="4" height="0.8" fill="#ABABAB"/><rect x="96" y="401.80" width="4" height="0.8" fill="#ABABAB"/><rect x="96" y="406.55" width="4" height="0.8" fill="#ABABAB"/><rect x="91.3" y="411.30" width="8.7" height="0.8" fill="#ABABAB"/><rect x="96" y="416.05" width="4" height="0.8" fill="#ABABAB"/><rect x="96" y="420.80" width="4" height="0.8" fill="#ABABAB"/><rect x="96" y="425.55" width="4" height="0.8" fill="#ABABAB"/><rect x="91.3" y="430.30" width="8.7" height="0.8" fill="#ABABAB"/><rect x="96" y="435.05" width="4" height="0.8" fill="#ABABAB"/><rect x="96" y="439.80" width="4" height="0.8" fill="#ABABAB"/><rect x="96" y="444.55" width="4" height="0.8" fill="#ABABAB"/><rect x="91.3" y="449.30" width="8.7" height="0.8" fill="#ABABAB"/><rect x="96" y="454.05" width="4" height="0.8" fill="#ABABAB"/><rect x="96" y="458.80" width="4" height="0.8" fill="#ABABAB"/><rect x="96" y="463.55" width="4" height="0.8" fill="#ABABAB"/><rect x="91.3" y="468.30" width="8.7" height="0.8" fill="#ABABAB"/><rect x="96" y="473.05" width="4" height="0.8" fill="#ABABAB"/><rect x="96" y="477.80" width="4" height="0.8" fill="#ABABAB"/><rect x="96" y="482.55" width="4" height="0.8" fill="#ABABAB"/><rect x="91.3" y="487.30" width="8.7" height="0.8" fill="#ABABAB"/><rect x="96" y="492.05" width="4" height="0.8" fill="#ABABAB"/><rect x="96" y="496.80" width="4" height="0.8" fill="#ABABAB"/><rect x="96" y="501.55" width="4" height="0.8" fill="#ABABAB"/><rect x="91.3" y="506.30" width="8.7" height="0.8" fill="#ABABAB"/><rect x="96" y="511.05" width="4" height="0.8" fill="#ABABAB"/><rect x="96" y="515.80" width="4" height="0.8" fill="#ABABAB"/><rect x="96" y="520.55" width="4" height="0.8" fill="#ABABAB"/><rect x="91.3" y="525.30" width="8.7" height="0.8" fill="#ABABAB"/><rect x="96" y="530.05" width="4" height="0.8" fill="#ABABAB"/><rect x="96" y="534.80" width="4" height="0.8" fill="#ABABAB"/><rect x="96" y="539.55" width="4" height="0.8" fill="#ABABAB"/><rect x="91.3" y="544.30" width="8.7" height="0.8" fill="#ABABAB"/><rect x="96" y="549.05" width="4" height="0.8" fill="#ABABAB"/><rect x="96" y="553.80" width="4" height="0.8" fill="#ABABAB"/><rect x="96" y="558.55" width="4" height="0.8" fill="#ABABAB"/><rect x="91.3" y="563.30" width="8.7" height="0.8" fill="#ABABAB"/><rect x="96" y="568.05" width="4" height="0.8" fill="#ABABAB"/><rect x="96" y="572.80" width="4" height="0.8" fill="#ABABAB"/><rect x="96" y="577.55" width="4" height="0.8" fill="#ABABAB"/><rect x="91.3" y="582.30" width="8.7" height="0.8" fill="#ABABAB"/><rect x="96" y="587.05" width="4" height="0.8" fill="#ABABAB"/><rect x="96" y="591.80" width="4" height="0.8" fill="#ABABAB"/><rect x="96" y="596.55" width="4" height="0.8" fill="#ABABAB"/><rect x="91.3" y="601.30" width="8.7" height="0.8" fill="#ABABAB"/><rect x="96" y="606.05" width="4" height="0.8" fill="#ABABAB"/><rect x="96" y="610.80" width="4" height="0.8" fill="#ABABAB"/><rect x="96" y="615.55" width="4" height="0.8" fill="#ABABAB"/><rect x="91.3" y="620.30" width="8.7" height="0.8" fill="#ABABAB"/><g font-family="Liberation Sans" font-size="9.6" fill="#757575" stroke="#757575" stroke-width="0.2"><text transform="translate(94.2 269.20) rotate(-90)" x="0" y="0" text-anchor="middle">9</text><text transform="translate(94.2 288.20) rotate(-90)" x="0" y="0" text-anchor="middle">8</text><text transform="translate(94.2 307.20) rotate(-90)" x="0" y="0" text-anchor="middle">7</text><text transform="translate(94.2 326.20) rotate(-90)" x="0" y="0" text-anchor="middle">6</text><text transform="translate(94.2 345.20) rotate(-90)" x="0" y="0" text-anchor="middle">5</text><text transform="translate(94.2 364.20) rotate(-90)" x="0" y="0" text-anchor="middle">4</text><text transform="translate(94.2 383.20) rotate(-90)" x="0" y="0" text-anchor="middle">3</text><text transform="translate(94.2 402.20) rotate(-90)" x="0" y="0" text-anchor="middle">2</text><text transform="translate(94.2 421.20) rotate(-90)" x="0" y="0" text-anchor="middle">1</text><text transform="translate(94.2 440.20) rotate(-90)" x="0" y="0" text-anchor="middle">0</text><text transform="translate(94.2 459.20) rotate(-90)" x="0" y="0" text-anchor="middle">1</text><text transform="translate(94.2 478.20) rotate(-90)" x="0" y="0" text-anchor="middle">2</text><text transform="translate(94.2 497.20) rotate(-90)" x="0" y="0" text-anchor="middle">3</text><text transform="translate(94.2 516.20) rotate(-90)" x="0" y="0" text-anchor="middle">4</text><text transform="translate(94.2 535.20) rotate(-90)" x="0" y="0" text-anchor="middle">5</text><text transform="translate(94.2 554.20) rotate(-90)" x="0" y="0" text-anchor="middle">6</text><text transform="translate(94.2 573.20) rotate(-90)" x="0" y="0" text-anchor="middle">7</text><text transform="translate(94.2 592.20) rotate(-90)" x="0" y="0" text-anchor="middle">8</text><text transform="translate(94.2 611.20) rotate(-90)" x="0" y="0" text-anchor="middle">9</text><text transform="translate(94.2 630.20) rotate(-90)" x="0" y="0" text-anchor="middle">10</text><text transform="translate(94.2 649.20) rotate(-90)" x="0" y="0" text-anchor="middle">11</text><text transform="translate(94.2 668.20) rotate(-90)" x="0" y="0" text-anchor="middle">12</text><text transform="translate(94.2 687.20) rotate(-90)" x="0" y="0" text-anchor="middle">13</text></g><rect x="89" y="260.1" width="15" height="0.9" fill="#A0A0A0"/><rect x="85" y="538.9" width="16" height="1.2" fill="#505050"/></svg>
<svg class="a" style="left:94px;top:141px" width="7" height="8"><path d="M6 1 V7 H0 Z" fill="#E3E3E3"/></svg>
<!-- GRAY AREA -->
<div class="a" style="left:109px;top:157px;width:744px;height:570px;background:#E9E9E9"></div>
<div class="a" style="left:160px;top:260px;width:642px;height:362px;background:#FCFCFC;border:1px solid #D3D3D3;box-shadow:0 1px 1.5px rgba(0,0,0,0.12)"></div>


<!-- SLIDE CONTENT -->
<svg class="a" style="left:0;top:0" width="1152" height="754" viewBox="0 0 1152 754">
<line x1="664.5" y1="306" x2="740.8" y2="395.2" stroke="#FF0000" stroke-width="68" stroke-linecap="round"/>
<line x1="664.5" y1="306" x2="740.8" y2="395.2" stroke="#FFFF00" stroke-width="60" stroke-linecap="round"/>
<rect x="195.35" y="422.25" width="195.3" height="149" rx="13" ry="13" fill="#F6C4A3" stroke="#2F5597" stroke-width="10.7"/>
<rect x="193.7" y="420.9" width="197.4" height="151.3" fill="none" stroke="#FFFFFF" stroke-width="1.3"/>
<line x1="292.5" y1="406.5" x2="292.5" y2="417.5" stroke="#555" stroke-width="1"/>
<circle cx="292.5" cy="400.2" r="5.8" fill="#FCFCFC" stroke="#8A8A8A" stroke-width="0.9"/>
<path d="M294.6 397.8 A3.1 3.1 0 1 0 295.4 401.4" fill="none" stroke="#3A3A3A" stroke-width="1.05"/>
<path d="M293.4 396.9 L296.3 396.6 L296 399.6 Z" fill="#3A3A3A"/>
<g fill="#FDFDFD" stroke="#4A4A4A" stroke-width="0.8">
<rect x="190.5" y="417.5" width="7.5" height="7.5"/>
<rect x="288.7" y="417.5" width="7.5" height="7.5"/>
<rect x="387" y="417.5" width="7.5" height="7.5"/>
<rect x="190.5" y="492.8" width="7.5" height="7.5"/>
<rect x="387" y="492.8" width="7.5" height="7.5"/>
<rect x="190.5" y="568" width="7.5" height="7.5"/>
<rect x="288.7" y="568" width="7.5" height="7.5"/>
<rect x="387" y="568" width="7.5" height="7.5"/>
</g>
<rect x="205.8" y="417.5" width="7.5" height="7.5" fill="#FFEDA8" stroke="#5A4A20" stroke-width="0.8"/>
<!-- move cursor -->
<path d="M327.4 531.5 L337.4 541.5 L327.4 551.5 L317.4 541.5 Z" fill="#FFFFFF" stroke="#D9A58C" stroke-width="0.6"/>
<rect x="323.5" y="537.5" width="2" height="2" fill="#C98E74"/><rect x="329.3" y="537.5" width="2" height="2" fill="#C98E74"/>
<rect x="323.5" y="543.5" width="2" height="2" fill="#C98E74"/><rect x="329.3" y="543.5" width="2" height="2" fill="#C98E74"/>
<g fill="#000">
<path d="M327.4 532.6 L330.2 535.6 L328.2 535.6 L328.2 537.6 L326.6 537.6 L326.6 535.6 L324.6 535.6 Z"/>
<path d="M327.4 550.4 L330.2 547.4 L328.2 547.4 L328.2 545.4 L326.6 545.4 L326.6 547.4 L324.6 547.4 Z"/>
<path d="M318.5 541.5 L321.5 538.7 L321.5 540.7 L323.5 540.7 L323.5 542.3 L321.5 542.3 L321.5 544.3 Z"/>
<path d="M336.3 541.5 L333.3 538.7 L333.3 540.7 L331.3 540.7 L331.3 542.3 L333.3 542.3 L333.3 544.3 Z"/>
<rect x="326.9" y="541" width="1" height="1"/>
</g>
</svg>

<!-- FORMAT PANEL -->
<div class="a" style="left:853px;top:133px;width:1px;height:598px;background:#D5D5D5"></div>
<div id="panel" class="a"></div>
<!-- panel tabs -->
<div class="a" style="left:854px;top:133px;width:149px;height:27px;background:#FAFAFA;border-radius:0 3px 0 0"></div>
<div class="a" style="left:1003px;top:133px;width:149px;height:27px;background:#E8E8E8;border-left:1px solid #D3D3D3;border-bottom:1px solid #D3D3D3"></div>
<div class="t" style="left:862.5px;top:136.5px;font-size:13.7px;-webkit-text-stroke:0.4px #333;color:#333">Format Shape</div>
<div class="a" style="left:982px;top:139px;width:14px;height:14px;border-radius:50%;background:#777"></div>
<svg class="a" style="left:982px;top:139px" width="14" height="14"><path d="M4.2 4.2L9.8 9.8M9.8 4.2L4.2 9.8" stroke="#fff" stroke-width="1.6"/></svg>
<div class="t" style="left:1012.5px;top:136.5px;font-size:13.7px;-webkit-text-stroke:0.4px #333;color:#333">Animations</div>
<!-- segmented -->
<div class="a" style="left:866px;top:176px;width:273px;height:21px;border-radius:4px;background:#FDFDFD;box-shadow:0 0.5px 1px rgba(0,0,0,0.15)"></div>
<div class="a" style="left:866px;top:176px;width:137px;height:21px;border-radius:4px 0 0 4px;background:#6E6E6E"></div>
<div class="t" style="left:866px;top:179px;width:137px;text-align:center;font-size:13.5px;color:#FFFFFF">Shape Options</div>
<div class="t" style="left:1003px;top:179px;width:136px;text-align:center;font-size:13.5px;color:#333">Text Options</div>
<!-- icon tabs -->
<div class="a" style="left:866px;top:213px;width:39px;height:37px;background:#FBFBFB;border:1px solid #D8D8D8;border-bottom:none;border-radius:3px 3px 0 0"></div>
<div class="a" style="left:854px;top:249px;width:298px;height:1px;background:#D3D3D3"></div>
<div class="a" style="left:867px;top:249px;width:37px;height:1px;background:#FBFBFB"></div>
<div class="a" style="left:854px;top:250px;width:298px;height:5px;background:#FAFAFA"></div>
<div class="a" style="left:854px;top:255px;width:286px;height:1px;background:#D3D3D3"></div>
<!-- scrollbar -->
<div class="a" style="left:1140px;top:250px;width:12px;height:481px;background:#FAFAFA"></div>
<div class="a" style="left:1143px;top:257px;width:8px;height:333px;border-radius:4px;background:#C9C9C9"></div>
<!-- sections bg -->
<div class="a" style="left:854px;top:256px;width:286px;height:475px;background:#EAEAEA"></div>
<div class="a" style="left:854px;top:280px;width:286px;height:1px;background:#D8D8D8"></div>
<div class="a" style="left:854px;top:279px;width:286px;height:1px;background:repeating-linear-gradient(90deg,#DADADA 0 2px,#EAEAEA 2px 4px)"></div>
<div class="a" style="left:854px;top:484px;width:286px;height:1px;background:#D3D3D3"></div>
<div class="a" style="left:854px;top:507px;width:286px;height:1px;background:#D8D8D8"></div>
<div class="a" style="left:854px;top:506px;width:286px;height:1px;background:repeating-linear-gradient(90deg,#DADADA 0 2px,#EAEAEA 2px 4px)"></div>
<svg class="a" style="left:862px;top:263px" width="10" height="9"><path d="M0.5 0.5H9.5L5 8.5Z" fill="#6A6A6A"/></svg>
<div class="t" style="left:876.5px;top:261px;font-size:12.8px;color:#262626">Fill</div>
<svg class="a" style="left:862px;top:492px" width="10" height="9"><path d="M0.5 0.5H9.5L5 8.5Z" fill="#6A6A6A"/></svg>
<div class="t" style="left:876.5px;top:490px;font-size:12.8px;color:#262626">Line</div>

<div class="radio" style="left:871px;top:290px"></div><div class="pl" style="left:890px;top:292px">No fill</div>
<div class="radio on" style="left:871px;top:310px"></div><div class="pl" style="left:890px;top:312px">Solid fill</div>
<div class="radio" style="left:871px;top:330px"></div><div class="pl" style="left:890px;top:332px">Gradient fill</div>
<div class="radio" style="left:871px;top:350px"></div><div class="pl" style="left:890px;top:352px">Picture or texture fill</div>
<div class="radio" style="left:871px;top:370px"></div><div class="pl" style="left:890px;top:372px">Pattern fill</div>
<div class="radio" style="left:871px;top:390px"></div><div class="pl" style="left:890px;top:392px">Slide background fill</div>
<div class="pl" style="left:872px;top:424px">Color</div>
<div class="pl" style="left:872px;top:455px">Transparency</div>

<div class="radio" style="left:871px;top:519px"></div><div class="pl" style="left:890px;top:521px">No line</div>
<div class="radio on" style="left:871px;top:539px"></div><div class="pl" style="left:890px;top:541px">Solid line</div>
<div class="radio" style="left:871px;top:559px"></div><div class="pl" style="left:890px;top:561px">Gradient line</div>
<div class="pl" style="left:872px;top:593px">Color</div>
<div class="pl" style="left:872px;top:624px">Transparency</div>
<div class="pl" style="left:872px;top:654px">Width</div>
<div class="pl" style="left:872px;top:684px">Compound type</div>
<div class="pl" style="left:872px;top:713px">Dash type</div>

<!-- controls -->
<div class="a" style="left:1084.5px;top:421px;width:36px;height:23px;border:1px solid #D3D3D3;border-radius:4px;background:linear-gradient(#FFFFFF 0,#F0F0F0 2px,#ECECEC 100%)"></div>
<div class="a" style="left:1090px;top:437px;width:18px;height:4px;background:#E97B33"></div>
<div class="dd" style="left:1112px;top:430.5px;border-left-width:2.6px;border-right-width:2.6px;border-top-width:3.6px;border-top-color:#6A6A6A"></div>
<div class="a" style="left:960px;top:460px;width:88px;height:6px;border-radius:3px;background:#ABABAB"></div>
<div class="a" style="left:960px;top:460px;width:48px;height:6px;border-radius:3px 0 0 3px;background:#1A7DF5"></div>
<div class="a" style="left:1001px;top:457px;width:12px;height:12px;border-radius:50%;background:#FFF;border:1px solid #8A8A8A"></div>
<div class="a spin" style="left:1057px;top:450px;width:63px;height:24px"></div>
<div class="t" style="left:1063px;top:456px;font-size:12px;color:#1E1E1E">55%</div>

<div class="a" style="left:1084.5px;top:589px;width:36px;height:24px;border:1px solid #D3D3D3;border-radius:4px;background:linear-gradient(#FFFFFF 0,#F0F0F0 2px,#ECECEC 100%)"></div>
<div class="a" style="left:1090px;top:605px;width:18px;height:4px;background:#2B4C93"></div>
<div class="dd" style="left:1112px;top:599.5px;border-left-width:2.6px;border-right-width:2.6px;border-top-width:3.6px;border-top-color:#6A6A6A"></div>
<div class="a" style="left:960px;top:629px;width:88px;height:6px;border-radius:3px;background:#ABABAB"></div>
<div class="a" style="left:959px;top:626px;width:12px;height:12px;border-radius:50%;background:#FFF;border:1px solid #8A8A8A"></div>
<div class="a spin" style="left:1057px;top:619px;width:63px;height:24px"></div>
<div class="t" style="left:1063px;top:625px;font-size:12px;color:#1E1E1E">0%</div>
<div class="a spin" style="left:1057px;top:649px;width:63px;height:24px"></div>
<div class="t" style="left:1063px;top:655px;font-size:12px;color:#1E1E1E">16 pt</div>
<div class="a" style="left:1084.5px;top:680px;width:36px;height:23px;border:1px solid #D3D3D3;border-radius:4px;background:linear-gradient(#FFFFFF 0,#F0F0F0 2px,#ECECEC 100%)"></div>
<div class="dd" style="left:1112px;top:689.5px;border-left-width:2.6px;border-right-width:2.6px;border-top-width:3.6px;border-top-color:#6A6A6A"></div>
<div class="a" style="left:1084.5px;top:710px;width:36px;height:23px;border:1px solid #D3D3D3;border-radius:4px;background:linear-gradient(#FFFFFF 0,#F0F0F0 2px,#ECECEC 100%)"></div>
<div class="dd" style="left:1112px;top:719.5px;border-left-width:2.6px;border-right-width:2.6px;border-top-width:3.6px;border-top-color:#6A6A6A"></div>



<!-- PANEL ICONS -->
<svg class="a" style="left:0;top:0" width="1152" height="754">
<!-- fill bucket tab icon -->
<path d="M884.2 226.2 L876.3 233.6 L884.1 240.9 L892.2 233 L889.6 230.6" fill="none" stroke="#333" stroke-width="1.1" stroke-linejoin="round"/>
<path d="M885.7 231.4 V223.6 Q885.7 222.3 886.5 222.3 Q887.3 222.3 887.3 223.6 V231" fill="none" stroke="#333" stroke-width="1"/>
<path d="M889.2 228.6 Q891.5 226.6 893.6 228.2 Q896.4 230.4 895.8 241.4 Q894.4 236.4 892.6 233.6 Q890.6 231 889.2 228.6 Z" fill="#2F7FE0"/>
<!-- pentagon -->
<path d="M927.8 221.3 L936.7 229.6 L933.5 239.5 H922.1 L919 229.6 Z" fill="#FBFBFB" stroke="#333" stroke-width="1.1" stroke-linejoin="round"/>
<path d="M922.1 239.6 H933.5" stroke="#222" stroke-width="1.4"/>
<!-- size icon -->
<g stroke="#333" stroke-width="1" fill="none">
<path d="M960.1 226.5 V242.6 M958.2 226.5 H962.2 M958.2 242.6 H962.2"/>
<rect x="964.4" y="226.5" width="16.2" height="16.1" fill="#FBFBFB"/>
<path d="M964.4 222.3 H980.6 M964.4 220.2 V224.4 M980.6 220.2 V224.4"/>
</g>
<g stroke="#2F8FE0" stroke-width="1" fill="none"><path d="M972.5 228.3 V240.6 M966.4 234.5 H978.6"/></g>
<g fill="#2F8FE0">
<path d="M972.5 227.6 L970.4 230.2 H974.6 Z M972.5 241.4 L970.4 238.8 H974.6 Z M965.6 234.5 L968.2 232.4 V236.6 Z M979.4 234.5 L976.8 232.4 V236.6 Z"/>
</g>
<!-- fill color bucket -->
<g transform="translate(1097.9 429.9) rotate(45)">
<rect x="-3.3" y="-3.3" width="6.6" height="6.6" rx="0.6" fill="#FFFFFF" stroke="#8A8A8A" stroke-width="0.6"/>
<rect x="-3.3" y="-3.3" width="6.6" height="1.9" fill="#2F7FE0"/>
</g>
<path d="M1099.3 428.2 V423.4 Q1099.3 422.1 1100.3 422.1 Q1101.3 422.1 1101.3 423.4 V427" fill="none" stroke="#1A1A1A" stroke-width="0.9"/>
<path d="M1101.8 427 Q1104.8 427.6 1104.2 433.4 L1103.1 432.8 Q1103.1 429.4 1101.6 428.4 Z" fill="#2F7FE0"/>
<rect x="1090" y="436.2" width="17.9" height="4.7" rx="1" fill="#E97C30"/>
<!-- line color pencil -->
<g transform="translate(1099 598) rotate(-45)">
<rect x="-3.6" y="-2.3" width="9.6" height="4.6" fill="#3A86E6"/>
<path d="M6.6 -2.3 H7.8 Q10 -2.3 10 0 Q10 2.3 7.8 2.3 H6.6 Z" fill="#3A86E6"/>
<path d="M-4.3 -2.3 L-9.6 0 L-4.3 2.3 Z" fill="#6E6E6E"/>
</g>
<rect x="1090" y="605.2" width="17.9" height="4.6" rx="0.8" fill="#2B5191"/>
<!-- compound -->
<path d="M1091.1 684.8 H1107 M1091.1 694 H1107" stroke="#2F7FE0" stroke-width="1.3"/>
<path d="M1095.1 688.3 H1107 M1095.1 697.5 H1107" stroke="#333" stroke-width="1.1"/>
<!-- dash -->
<path d="M1091.5 716.5 H1107" stroke="#333" stroke-width="1"/>
<path d="M1092 719.8 H1107" stroke="#333" stroke-width="1" stroke-dasharray="1 1.6"/>
<path d="M1091.8 722.9 H1107" stroke="#333" stroke-width="1" stroke-dasharray="2.6 1.4"/>
<path d="M1092 726 H1107" stroke="#333" stroke-width="1" stroke-dasharray="1 1.5 2.4 1.5"/>
<!-- spinner arrows -->
<g fill="#555">
<path d="M1111.2 459 L1113.7 455.2 L1116.2 459 Z M1111.2 465.8 H1116.2 L1113.7 469.6 Z"/>
<path d="M1111.2 628 L1113.7 624.2 L1116.2 628 Z M1111.2 634.8 H1116.2 L1113.7 638.6 Z"/>
<path d="M1111.2 658 L1113.7 654.2 L1116.2 658 Z M1111.2 664.8 H1116.2 L1113.7 668.6 Z"/>
</g>
<g stroke="#E2E2E2" stroke-width="0.8">
<path d="M1106.3 452 V472 M1106.3 462.6 H1119.5"/>
<path d="M1106.3 621 V641 M1106.3 631.6 H1119.5"/>
<path d="M1106.3 651 V671 M1106.3 661.6 H1119.5"/>
</g>
</svg>

<!-- KEYBOARD OVERLAY -->
<div class="a" style="left:0;top:612px;width:198px;height:100px;border-radius:15px;background:#3B3B3B;overflow:hidden">
<div class="a" style="left:161px;top:0;width:37px;height:9px;background:#4A4A4A"></div>
<div class="a" style="left:85px;top:0;width:15px;height:100px;background:repeating-linear-gradient(45deg,#3B3B3B 0 1.5px,#494949 1.5px 3px)"></div>
<div class="a" style="left:0;top:68.5px;width:198px;height:1.5px;background:#D6D6D6"></div>
<div class="a" style="left:47.9px;top:70px;width:1.2px;height:30px;background:#D6D6D6"></div>
<div class="a" style="left:97.6px;top:70px;width:1.2px;height:30px;background:#D6D6D6"></div>
<div class="a" style="left:147.8px;top:70px;width:1.2px;height:30px;background:#D6D6D6"></div>
</div>
<svg class="a" style="left:0;top:682.5px" width="200" height="32">
<path d="M23 8 L29 14 L26 14 L26 19 L20 19 L20 14 L17 14 Z" fill="none" stroke="#9A9A9A" stroke-width="1.8" stroke-linejoin="round"/>
<path d="M68 16.5 L72.5 12 L77 16.5" fill="none" stroke="#9A9A9A" stroke-width="2"/>
<path d="M116 10.5 L120.5 10.5 L125 20 L129.5 20 M124.5 10.5 L129.5 10.5" fill="none" stroke="#9A9A9A" stroke-width="1.8"/>
<path d="M169.5 13 L169.5 17 M175.5 13 L175.5 17 M168 14.3 L177 14.3 M168 15.7 L177 15.7" fill="none" stroke="#9A9A9A" stroke-width="1.5"/>
<circle cx="168.5" cy="12" r="1.8" fill="none" stroke="#9A9A9A" stroke-width="1.4"/><circle cx="176.5" cy="12" r="1.8" fill="none" stroke="#9A9A9A" stroke-width="1.4"/>
<circle cx="168.5" cy="18" r="1.8" fill="none" stroke="#9A9A9A" stroke-width="1.4"/><circle cx="176.5" cy="18" r="1.8" fill="none" stroke="#9A9A9A" stroke-width="1.4"/>
</svg>

<!-- STATUS BAR -->
<div class="a" style="left:0;top:731px;width:1152px;height:23px;background:linear-gradient(#EAEAEA 0,#EAEAEA 9px,#D5D5D5 10px,#D5D5D5 23px);border-top:1px solid #B9B9B9"></div>
<div class="t" style="left:20.5px;top:736.5px;font-size:12.1px;color:#555;letter-spacing:0.1px">Slide 1 of 1</div>
<div class="t" style="left:101.5px;top:736.5px;font-size:12.2px;color:#555;letter-spacing:0.05px">English (China)</div>


<div class="a" style="left:799px;top:732px;width:37px;height:22px;background:#BEBEBE"></div>
<div class="t" style="left:657.6px;top:736px;font-size:12.5px;color:#555">Notes</div>
<div class="t" style="left:728.4px;top:736px;font-size:12.5px;color:#555">Comments</div>
<div class="t" style="left:1065.8px;top:736px;font-size:12.5px;color:#555">67%</div>
<svg class="a" style="left:0;top:728px" width="1152" height="26">
<path d="M641 13.2 H653 M641 16.2 H653 M641 19.2 H653" stroke="#6A6A6A" stroke-width="1"/>
<path d="M643.8 10.6 L647 8.2 L650.2 10.6" fill="none" stroke="#6A6A6A" stroke-width="1"/>
<path d="M711.4 10.8 Q711.4 9.4 712.8 9.4 H722.3 Q723.7 9.4 723.7 10.8 V16.9 Q723.7 18.3 722.3 18.3 H716.4 L713.4 21.2 V18.3 H712.8 Q711.4 18.3 711.4 16.9 Z" fill="#6A6A6A"/>
<rect x="810.5" y="8.2" width="14" height="12.4" rx="1" fill="#FFFFFF"/>
<rect x="812.6" y="10.2" width="9.8" height="6.4" fill="#9A9A9A"/>
<rect x="812.6" y="17.6" width="9.8" height="1.2" fill="#9A9A9A"/>
<g fill="#6A6A6A"><rect x="846" y="10" width="6.4" height="3.8"/><rect x="854.4" y="10" width="6.4" height="3.8"/><rect x="846" y="15.6" width="6.4" height="3.8"/><rect x="854.4" y="15.6" width="6.4" height="3.8"/></g>
<rect x="882.6" y="9.6" width="14.2" height="8.4" fill="none" stroke="#6A6A6A" stroke-width="1.2"/>
<path d="M889.7 18 V21 M886.2 21.2 H893.2 M885.2 12.2 H892" stroke="#6A6A6A" stroke-width="1.2"/>
<path d="M915.1 15 H922.9" stroke="#6A6A6A" stroke-width="1.6"/>
<rect x="931.8" y="13" width="96.7" height="4" rx="2" fill="#8C8C8C"/>
<circle cx="979.8" cy="15" r="1.1" fill="#BDBDBD"/>
<circle cx="963.8" cy="15" r="5.6" fill="#FFFFFF" stroke="#A0A0A0" stroke-width="0.5"/>
<path d="M1037.2 15 H1045.2 M1041.2 11 V19" stroke="#6A6A6A" stroke-width="1.6"/>
<rect x="1114.2" y="9.3" width="11.6" height="11.6" fill="none" stroke="#6A6A6A" stroke-width="1"/>
<path d="M1120 10.4 V13.4 M1120 16.8 V19.8 M1115.2 15.1 H1118.2 M1121.8 15.1 H1124.8" stroke="#6A6A6A" stroke-width="0.8"/>
<path d="M1118.6 11.8 L1120 10.2 L1121.4 11.8 Z M1118.6 18.4 L1120 20 L1121.4 18.4 Z M1116.6 13.7 L1115 15.1 L1116.6 16.5 Z M1123.4 13.7 L1125 15.1 L1123.4 16.5 Z" fill="#6A6A6A"/>
</svg>
</body></html>
